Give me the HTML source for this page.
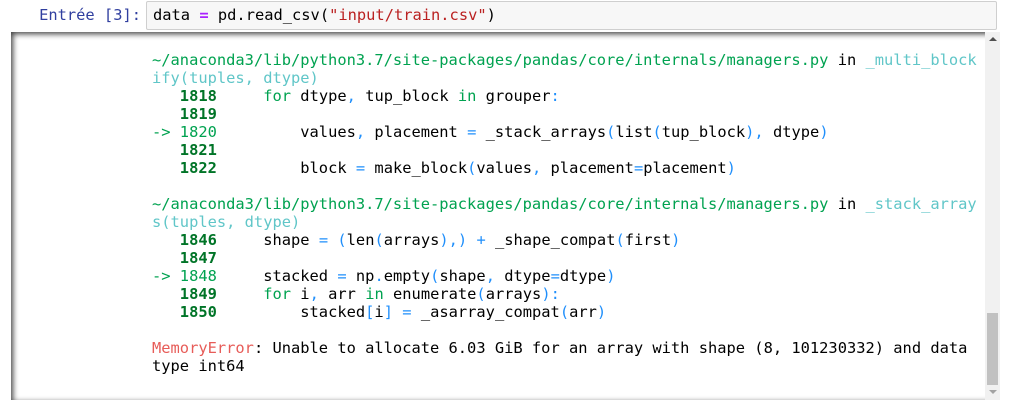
<!DOCTYPE html>
<html><head><meta charset="utf-8"><style>
body{margin:0;width:1010px;height:413px;background:#fff;overflow:hidden;position:relative;font-family:"DejaVu Sans Mono","Liberation Mono",monospace;}
.prompt{position:absolute;left:0;width:141px;top:6px;text-align:right;color:#303f9f;font-size:15.4px;line-height:18px;}
.inbox{position:absolute;left:146px;top:1px;width:851px;height:29px;border:1px solid #cfcfcf;border-radius:2px;background:#f7f7f7;box-sizing:border-box;}
.code{position:absolute;left:153px;top:6px;font-size:15.4px;line-height:18px;color:#000;white-space:pre;}
.out{position:absolute;left:11px;top:32px;width:989px;height:368px;box-sizing:border-box;box-shadow:inset 2px 2px 6px rgba(0,0,0,0.75);background:#fff;overflow:hidden;}
.txt{position:absolute;left:141px;top:19px;font-size:15.4px;line-height:18px;color:#000;white-space:pre;}
.sb{position:absolute;left:974px;top:0;width:15px;height:368px;background:#f1f1f1;}
.th{position:absolute;left:2px;top:281px;width:11px;height:72px;background:#c1c1c1;}
.up{position:absolute;left:4px;top:5px;width:0;height:0;border-left:4px solid transparent;border-right:4px solid transparent;border-bottom:4px solid #505050;}
.dn{position:absolute;left:4px;top:358px;width:0;height:0;border-left:4px solid transparent;border-right:4px solid transparent;border-top:4px solid #a3a3a3;}
.g{color:#00a250}.c{color:#60c6c8}.n{color:#007427;font-weight:bold}.p{color:#208ffb}.r{color:#e75c58}.o{color:#aa22ff;font-weight:bold}.s{color:#ba2121}
</style></head><body>
<div class="prompt">Entrée [3]:</div>
<div class="inbox"></div>
<div class="code">data <span class="o">=</span> pd.read_csv(<span class="s">"input/train.csv"</span>)</div>
<div class="out">
<div class="txt"><span class="g">~/anaconda3/lib/python3.7/site-packages/pandas/core/internals/managers.py</span> in <span class="c">_multi_block</span>
<span class="c">ify(tuples, dtype)</span>
<span class="n">   1818</span>     <span class="g">for</span> dtype<span class="p">,</span> tup_block <span class="g">in</span> grouper<span class="p">:</span>
<span class="n">   1819</span> 
<span class="g">-&gt; 1820</span>         values<span class="p">,</span> placement <span class="p">=</span> _stack_arrays<span class="p">(</span>list<span class="p">(</span>tup_block<span class="p">),</span> dtype<span class="p">)</span>
<span class="n">   1821</span> 
<span class="n">   1822</span>         block <span class="p">=</span> make_block<span class="p">(</span>values<span class="p">,</span> placement<span class="p">=</span>placement<span class="p">)</span>

<span class="g">~/anaconda3/lib/python3.7/site-packages/pandas/core/internals/managers.py</span> in <span class="c">_stack_array</span>
<span class="c">s(tuples, dtype)</span>
<span class="n">   1846</span>     shape <span class="p">=</span> <span class="p">(</span>len<span class="p">(</span>arrays<span class="p">),)</span> <span class="p">+</span> _shape_compat<span class="p">(</span>first<span class="p">)</span>
<span class="n">   1847</span> 
<span class="g">-&gt; 1848</span>     stacked <span class="p">=</span> np<span class="p">.</span>empty<span class="p">(</span>shape<span class="p">,</span> dtype<span class="p">=</span>dtype<span class="p">)</span>
<span class="n">   1849</span>     <span class="g">for</span> i<span class="p">,</span> arr <span class="g">in</span> enumerate<span class="p">(</span>arrays<span class="p">):</span>
<span class="n">   1850</span>         stacked<span class="p">[</span>i<span class="p">]</span> <span class="p">=</span> _asarray_compat<span class="p">(</span>arr<span class="p">)</span>

<span class="r">MemoryError</span>: Unable to allocate 6.03 GiB for an array with shape (8, 101230332) and data
type int64</div>
<div class="sb"><div class="up"></div><div class="th"></div><div class="dn"></div></div>
</div>
</body></html>
